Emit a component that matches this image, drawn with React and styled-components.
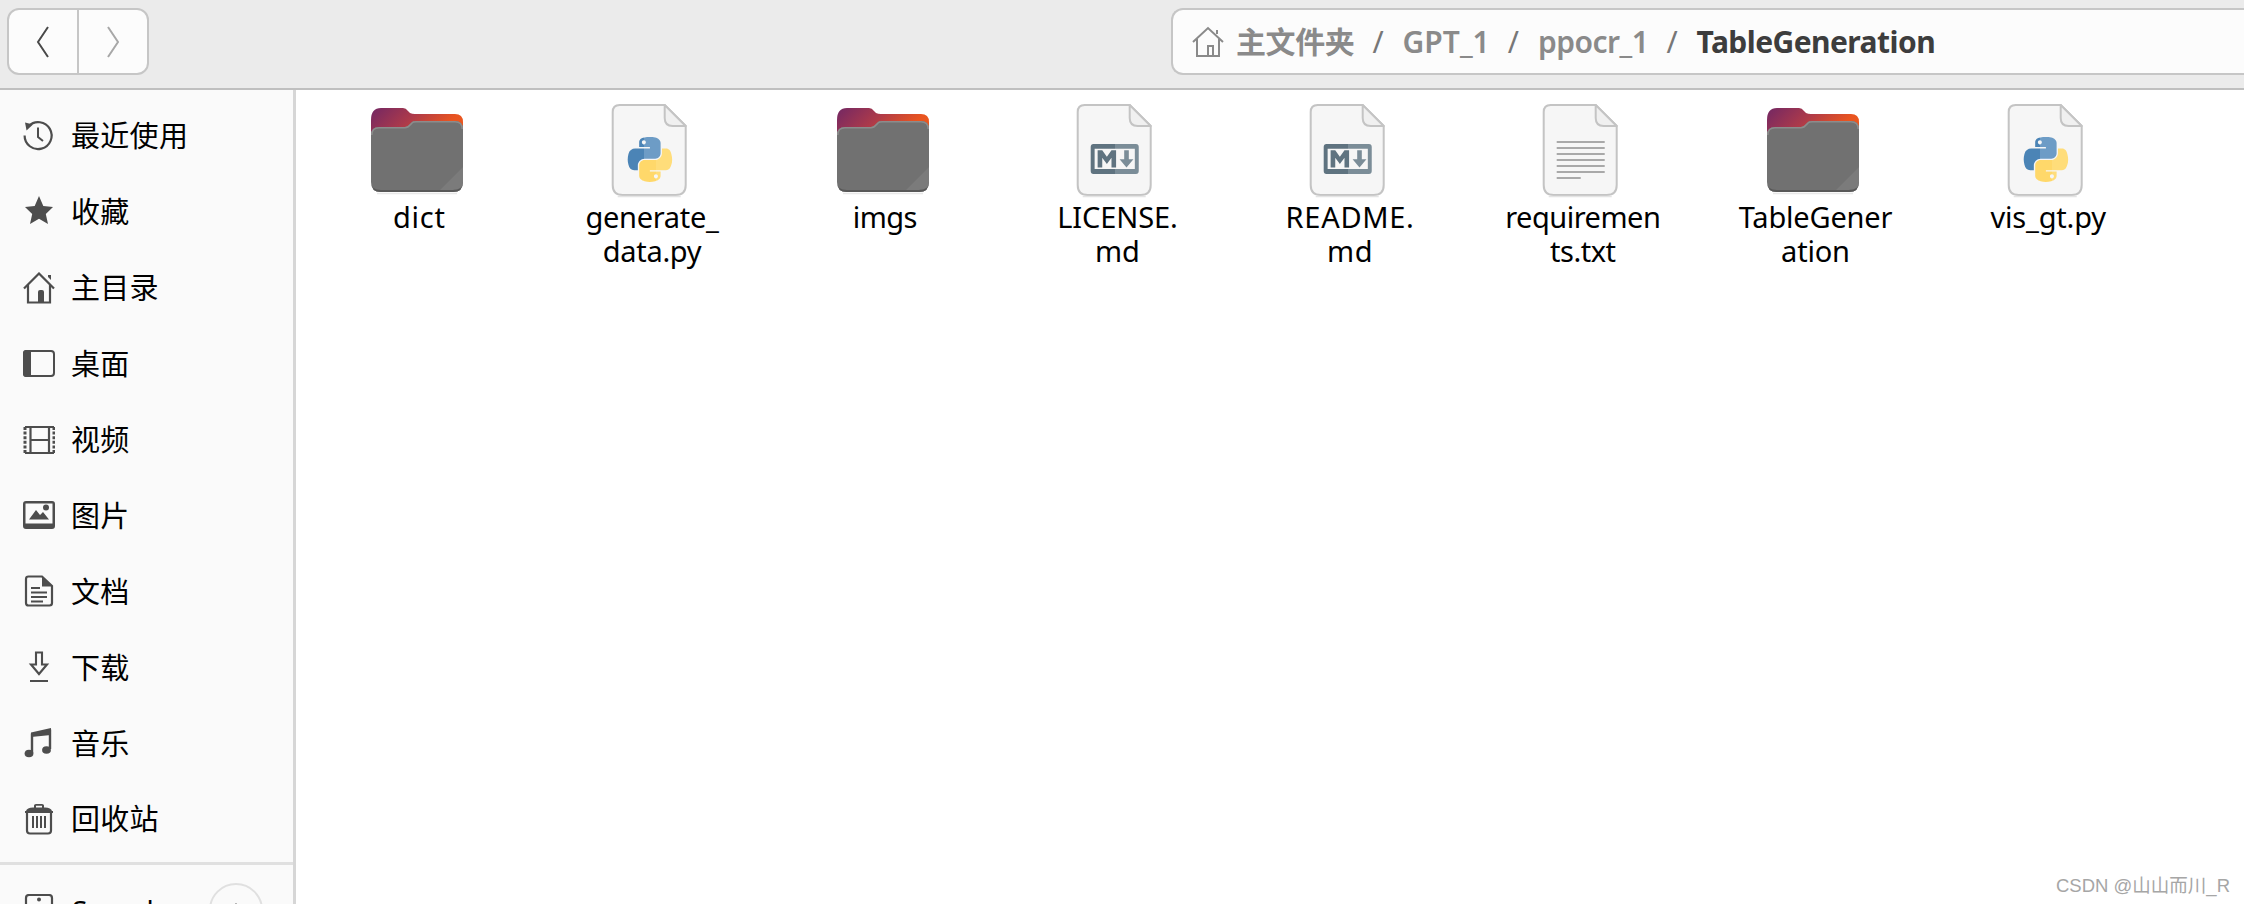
import React from 'react';
import styled, { createGlobalStyle } from 'styled-components';

const Global = createGlobalStyle`
  html, body { margin: 0; padding: 0; background: #fff; }
  #root { width: 2244px; height: 904px; overflow: hidden; }
`;

const Window = styled.div`
  position: relative;
  width: 2244px;
  height: 904px;
  overflow: hidden;
  display: flex;
  flex-direction: column;
  background: #fff;
  font-family: "Noto Sans", "Noto Sans CJK SC", sans-serif;
`;
const HeaderBar = styled.header`
  flex: none;
  height: 88px;
  box-sizing: content-box;
  display: flex;
  align-items: flex-start;
  justify-content: space-between;
  padding: 0 0 0 7px;
  background: #ebebeb;
  border-bottom: 2px solid #bfbfbf;
`;
const NavGroup = styled.div`
  margin-top: 8px;
  width: 142px;
  height: 67px;
  box-sizing: border-box;
  display: flex;
  border: 2px solid #c6c6c6;
  border-radius: 12px;
  background: #fcfcfc;
  overflow: hidden;
`;
const NavButton = styled.button`
  flex: 1;
  padding: 0;
  border: 0;
  background: transparent;
  display: flex;
  align-items: center;
  justify-content: center;
  & + & { border-left: 2px solid #c6c6c6; }
  svg { stroke: ${p => (p.$off ? '#a8a8a8' : '#4a4a4a')}; }
`;
const PathBar = styled.div`
  margin-top: 8px;
  width: 1073px;
  height: 67px;
  box-sizing: border-box;
  display: flex;
  align-items: center;
  padding-left: 19px;
  border: 2px solid #c6c6c6;
  border-right: 0;
  border-radius: 12px 0 0 12px;
  background: #fcfcfc;
`;
const PathHome = styled.svg`
  flex: none;
  width: 32px;
  height: 32px;
  margin-right: 12px;
  fill: none;
  stroke: #8a8a8a;
  stroke-width: 2;
`;
const Crumb = styled.span`
  font-size: 30px;
  line-height: 34px;
  white-space: nowrap;
  font-weight: ${p => (p.$current ? 700 : 600)};
  color: ${p => (p.$current ? '#3d3d3d' : '#8a8a8a')};
  letter-spacing: ${p => p.$track || '0'};
`;
const CrumbSep = styled.span`
  font-size: 30px;
  line-height: 34px;
  color: #777;
  margin: 0 19px 0 18px;
`;
const Body = styled.div`
  flex: 1;
  min-height: 0;
  display: flex;
`;
const Sidebar = styled.nav`
  flex: none;
  width: 296px;
  box-sizing: border-box;
  padding-top: 8px;
  background: #fafafa;
  border-right: 3px solid #d6d6d6;
  overflow: hidden;
`;
const Place = styled.div`
  height: 75.9px;
  display: flex;
  align-items: center;
  padding-left: 23px;
  color: #000;
  font-size: 29px;
  font-family: "Noto Sans CJK SC", "Noto Sans", sans-serif;
`;
const PlaceIcon = styled.svg`
  flex: none;
  width: 32px;
  height: 32px;
  margin-right: 17px;
  color: #4d4d4d;
`;
const PlaceName = styled.span`
  margin: -3px 0 0 -1px;
  letter-spacing: 0.3px;
`;
const Divider = styled.div`
  margin-top: 5px;
  height: 3px;
  background: #e0e0e0;
`;
const Device = styled(Place)`
  margin-top: 7px;
  justify-content: space-between;
  padding-right: 30px;
  font-family: "Noto Sans", sans-serif;
  font-size: 28px;
`;
const DeviceName = styled.span`
  display: flex;
  align-items: center;
`;
const EjectButton = styled.div`
  width: 54px;
  height: 54px;
  box-sizing: border-box;
  border: 2px solid #e0e0e0;
  border-radius: 50%;
  display: flex;
  align-items: center;
  justify-content: center;
  color: #4d4d4d;
`;
const FileGrid = styled.main`
  flex: 1;
  display: grid;
  grid-template-columns: repeat(8, 232.7px);
  align-content: start;
  padding: 12px 0 0 7px;
`;
const FileItem = styled.div`
  display: flex;
  flex-direction: column;
  align-items: center;
`;
const FileIconBox = styled.svg`
  width: 96px;
  height: 96px;
  display: block;
`;
const FileLabel = styled.div`
  margin-top: 2px;
  color: #000;
  font-size: 29px;
  line-height: 34px;
  letter-spacing: ${p => p.$track || '0'};
  text-align: center;
  white-space: pre-line;
`;
const Watermark = styled.div`
  position: absolute;
  right: 14px;
  bottom: 7px;
  color: #a6a6a6;
  font-size: 18.5px;
  line-height: 22px;
  font-family: "Liberation Sans", "Noto Sans CJK SC", sans-serif;
`;

const ClockI = () => (<><path d="M5.6 6A13.5 13.5 0 1 1 1.6 15.5" fill="none" stroke="currentColor" strokeWidth="2.2" /><path d="M2 2.5 L10 4.5 L3.5 10.5Z" fill="currentColor" /><path d="M15 7.5V17L20 21" fill="none" stroke="currentColor" strokeWidth="2" /></>);
const StarI = () => (<path d="M16 0 L20.3 10 L30 11 L22.8 18 L25 28 L16 22.8 L7 28 L9.2 18 L2 11 L11.7 10Z" fill="currentColor" />);
const HomeI = () => (<><path d="M1 16.5 L16 1.5 L31 16.5" fill="none" stroke="currentColor" strokeWidth="2.2" /><path d="M5 13V30.5H27V13" fill="none" stroke="currentColor" strokeWidth="2.2" /><path d="M15 20Q15 18 17 18H19Q21 18 21 20V31H15Z" fill="currentColor" /><path d="M25 3H28V8L25 5Z" fill="currentColor" /></>);
const DeskI = () => (<><rect x="1" y="3" width="30" height="25" rx="3" fill="none" stroke="currentColor" strokeWidth="2" /><path d="M3 2H8V29H3Q0 29 0 26V5Q0 2 3 2Z" fill="currentColor" /></>);
const FilmI = () => (<><path d="M2 3H31M2 29H31M7.5 3V29M26 3V29M7.5 16H26" fill="none" stroke="currentColor" strokeWidth="2.2" /><path d="M2 3V29M31 3V29" fill="none" stroke="currentColor" strokeWidth="3" strokeDasharray="3 1.6" /></>);
const PicI = () => (<><path fillRule="evenodd" d="M3 2H29Q32 2 32 5V27Q32 30 29 30H3Q0 30 0 27V5Q0 2 3 2ZM2.5 4.5V24.5H29.5V4.5Z" fill="currentColor" /><path d="M6 20.5L13 11L17 16L20 13L26 20.5Z" fill="currentColor" /><circle cx="23" cy="8.5" r="3" fill="currentColor" /></>);
const DocI = () => (<><path d="M5.5 1.5H19L29 11V28Q29 30.5 26.5 30.5H5.5Q3 30.5 3 28V4Q3 1.5 5.5 1.5Z" fill="none" stroke="currentColor" strokeWidth="2.2" /><path d="M19 1L29.5 11.5H19Z" fill="currentColor" /><path d="M8 13H17M8 17.5H24M8 22H24M8 26.5H20" fill="none" stroke="currentColor" strokeWidth="2" /></>);
const DownI = () => (<path d="M13 1.5H19V13.5H24L16 23L8 13.5H13ZM7 30H25" fill="none" stroke="currentColor" strokeWidth="2.1" />);
const MusicI = () => (<><path d="M9 26V7.5L27 4V22" fill="none" stroke="currentColor" strokeWidth="2.4" /><path d="M8 5.5L28 1V8L8 10Z" fill="currentColor" /><ellipse cx="6" cy="26.5" rx="4.4" ry="3.8" fill="currentColor" /><ellipse cx="23.5" cy="23" rx="4.4" ry="3.8" fill="currentColor" /></>);
const TrashI = () => (<><path d="M4 9V27.5Q4 30.5 7 30.5H25Q28 30.5 28 27.5V9" fill="none" stroke="currentColor" strokeWidth="2.2" /><path d="M2 8H30V10H2Z M3 8Q4 4.5 10 4.5H22Q28 4.5 29 8ZM11 5V2.5Q11 1 13 1H19Q21 1 21 2.5V5H19V2.8H13V5Z" fill="currentColor" /><path d="M10 13V25M14 13V25M18 13V25M22 13V25" stroke="currentColor" strokeWidth="2" /></>);
const DriveI = () => (<><rect x="3" y="1" width="26" height="30" rx="3" fill="none" stroke="currentColor" strokeWidth="2.2" /><circle cx="16" cy="5.5" r="2" fill="currentColor" /></>);

const Folder = () => (
  <FileIconBox viewBox="0 0 96 96">
    <defs>
      <linearGradient id="folderBack" x1="0" y1="0.2" x2="1" y2="0.6">
        <stop offset="0" stopColor="#7b2a60" />
        <stop offset="0.4" stopColor="#ad3a4a" />
        <stop offset="0.8" stopColor="#e95420" />
        <stop offset="1" stopColor="#ea5a20" />
      </linearGradient>
    </defs>
    <path d="M0 18Q0 6 10 6H32Q35 6 37 9L39 11Q41 12 44 12H84Q92 12 92 20V42H0Z" fill="url(#folderBack)" />
    <path d="M0 33Q0 25 8 25H34Q37 25 39 22L41 20Q42 19 45 19H84Q92 19 92 27V80Q92 90 82 90H10Q0 90 0 80Z" fill="#717171" />
    <path d="M0.8 33Q0.8 25.8 8 25.8H34Q37 25.8 39.5 22.6L41.2 20.8Q42 19.8 45 19.8H84Q91.2 19.8 91.2 27" fill="none" stroke="#8c8c8c" strokeWidth="1.6" />
    <path d="M92 65V80Q92 88 82 88H69Z" fill="#7b7b7b" />
    <path d="M0 80Q0 90 10 90H82Q92 90 92 80Q92 88 82 88H10Q0 88 0 80Z" fill="#585858" />
    <path d="M6 91.5H86" stroke="#e8e8e8" strokeWidth="1.5" />
  </FileIconBox>
);

const Page = ({ children }) => (
  <FileIconBox viewBox="0 0 96 96">
    <g transform="translate(-2.3 0)">
      <path d="M18 3H63L84 24V83Q84 93 74 93H21Q11 93 11 83V10Q11 3 18 3Z" fill="#f6f6f6" stroke="#c4c4c4" strokeWidth="2" />
      <path d="M63 3L84 24H71Q63 24 63 16Z" fill="#f0f0f0" stroke="#c4c4c4" strokeWidth="2" strokeLinejoin="round" />
      <path d="M16 94.5H79" stroke="#e4e4e4" strokeWidth="1.5" />
      {children}
    </g>
  </FileIconBox>
);

const PyGlyph = () => (
  <Page>
    <defs>
      <linearGradient id="pyBlue" x1="0" y1="0" x2="1" y2="0">
        <stop offset="0.5" stopColor="#4b84b6" />
        <stop offset="0.5" stopColor="#6d9cc6" />
      </linearGradient>
      <linearGradient id="pyYellow" x1="0" y1="0" x2="1" y2="0">
        <stop offset="0.5" stopColor="#ffd86a" />
        <stop offset="0.5" stopColor="#ffdd7a" />
      </linearGradient>
    </defs>
    <g transform="translate(26 35) scale(0.4)">
      <path fillRule="evenodd" fill="url(#pyBlue)" d="M54.919 0.001C50.335 0.022 45.958 0.413 42.106 1.095 30.760 3.099 28.700 7.295 28.700 15.032v10.219h26.813v3.406H28.700 18.637c-7.793 0-14.617 4.684-16.752 13.594-2.462 10.213-2.571 16.586 0 27.250 1.906 7.938 6.458 13.594 14.250 13.594h9.219V70.844c0-8.850 7.657-16.656 16.750-16.656h26.781c7.455 0 13.406-6.138 13.406-13.625V15.032c0-7.266-6.130-12.725-13.406-13.937C64.281 0.328 59.502-0.020 54.919 0.001z M40.419 8.220c2.770 0 5.031 2.299 5.031 5.125 0 2.816-2.262 5.094-5.031 5.094-2.780 0-5.031-2.278-5.031-5.094 0-2.826 2.252-5.125 5.031-5.125z" />
      <path fillRule="evenodd" fill="url(#pyYellow)" d="M85.638 28.657v11.906c0 9.231-7.826 17-16.750 17H42.106c-7.336 0-13.406 6.278-13.406 13.625v25.531c0 7.266 6.319 11.540 13.406 13.625 8.487 2.496 16.626 2.947 26.781 0 6.750-1.954 13.406-5.888 13.406-13.625V86.500H55.513v-3.406H95.700c7.793 0 10.696-5.436 13.406-13.594 2.799-8.399 2.680-16.476 0-27.250-1.926-7.757-5.604-13.594-13.406-13.594zM70.575 93.313c2.780 0 5.031 2.278 5.031 5.094 0 2.826-2.252 5.125-5.031 5.125-2.770 0-5.031-2.299-5.031-5.125 0-2.816 2.262-5.094 5.031-5.094z" />
    </g>
  </Page>
);

const MdGlyph = () => (
  <Page>
    <defs>
      <linearGradient id="mdTone" x1="0" y1="0" x2="1" y2="0">
        <stop offset="0.5" stopColor="#5f7380" />
        <stop offset="0.5" stopColor="#7b8d98" />
      </linearGradient>
    </defs>
    <g transform="translate(24 40.7) scale(0.231 0.254)" fill="url(#mdTone)">
      <path fillRule="evenodd" d="M12 5H196A12 12 0 0 1 208 17V111A12 12 0 0 1 196 123H12A12 12 0 0 1 0 111V17A12 12 0 0 1 12 5ZM17 24V104H191V24Z" />
      <path d="M30 98V30h20l20 25 20-25h20v68H90V59L70 84 50 59v39zm125 0l-30-33h20V30h20v35h20z" />
    </g>
  </Page>
);

const TxtGlyph = () => (
  <Page>
    <path d="M24 40H72M24 46H72M24 52H72M24 58H72M24 64H72M24 70H72M24 76H48" stroke="#a9a9a9" strokeWidth="2" />
  </Page>
);

const places = [
  ['最近使用', ClockI], ['收藏', StarI], ['主目录', HomeI], ['桌面', DeskI], ['视频', FilmI],
  ['图片', PicI], ['文档', DocI], ['下载', DownI], ['音乐', MusicI], ['回收站', TrashI],
];
const files = [
  ['dict', Folder, '0.75px'], ['generate_\ndata.py', PyGlyph, '-0.3px'], ['imgs', Folder, '-0.6px'], ['LICENSE.\nmd', MdGlyph, '-0.1px'],
  ['README.\nmd', MdGlyph, '0.7px'], ['requiremen\nts.txt', TxtGlyph, '-0.5px'], ['TableGener\nation', Folder, '-0.2px'], ['vis_gt.py', PyGlyph, '-0.2px'],
];

export default function App() {
  return (
    <Window>
      <Global />
      <HeaderBar>
        <NavGroup>
          <NavButton aria-label="back">
            <svg width="14" height="34" viewBox="0 0 14 34" fill="none" strokeWidth="2"><path d="M12 2L2 17L12 32" /></svg>
          </NavButton>
          <NavButton $off aria-label="forward">
            <svg width="14" height="34" viewBox="0 0 14 34" fill="none" strokeWidth="2"><path d="M2 2L12 17L2 32" /></svg>
          </NavButton>
        </NavGroup>
        <PathBar>
          <PathHome viewBox="0 0 32 32">
            <path d="M1 16L16 2L31 16M5 13V30H27V13M16 30V20H21V30M25 4V8" />
          </PathHome>
          <Crumb $track="-0.4px">主文件夹</Crumb><CrumbSep>/</CrumbSep>
          <Crumb>GPT_1</Crumb><CrumbSep>/</CrumbSep>
          <Crumb $track="-0.5px">ppocr_1</Crumb><CrumbSep>/</CrumbSep>
          <Crumb $current $track="-0.55px">TableGeneration</Crumb>
        </PathBar>
      </HeaderBar>
      <Body>
        <Sidebar>
          {places.map(([name, Icon]) => (
            <Place key={name}>
              <PlaceIcon viewBox="0 0 32 32"><Icon /></PlaceIcon>
              <PlaceName>{name}</PlaceName>
            </Place>
          ))}
          <Divider />
          <Device>
            <DeviceName>
              <PlaceIcon viewBox="0 0 32 32"><DriveI /></PlaceIcon>
              Samples
            </DeviceName>
            <EjectButton>
              <svg width="20" height="20" viewBox="0 0 20 20" fill="currentColor"><path d="M10 3L17 12H3ZM3 14H17V17H3Z" /></svg>
            </EjectButton>
          </Device>
        </Sidebar>
        <FileGrid>
          {files.map(([name, Glyph, track]) => (
            <FileItem key={name}>
              <Glyph />
              <FileLabel $track={track}>{name}</FileLabel>
            </FileItem>
          ))}
        </FileGrid>
      </Body>
      <Watermark>CSDN @山山而川_R</Watermark>
    </Window>
  );
}
